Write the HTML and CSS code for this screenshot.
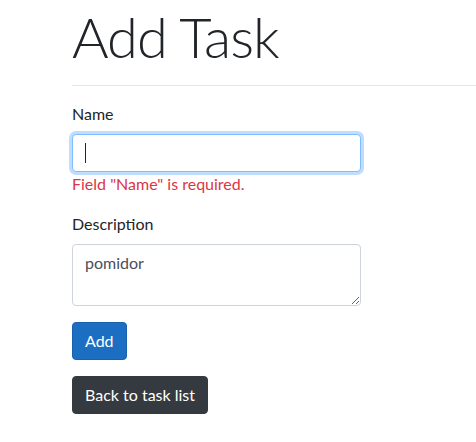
FILE: index.html
```html
<!DOCTYPE html>
<html lang="en">
<head>
<meta charset="utf-8">
<title>Add Task</title>
<link rel="stylesheet" href="styles.css">
</head>
<body>
<div class="page">
  <h1 class="title">Add Task</h1>
  <hr class="rule">
  <form class="task-form">
    <div class="group">
      <label class="label" for="name">Name</label>
      <div class="field">
        <input id="name" class="control is-focused" type="text" value="">
        <span class="caret"></span>
      </div>
      <div class="error">Field "Name" is required.</div>
    </div>
    <div class="group">
      <label class="label" for="desc">Description</label>
      <textarea id="desc" class="control area" rows="2">pomidor</textarea>
    </div>
    <button type="button" class="btn btn-primary">Add</button>
  </form>
  <div class="back">
    <button type="button" class="btn btn-dark">Back to task list</button>
  </div>
</div>
</body>
</html>
```
FILE: styles.css
```css
html, body {
  margin: 0;
  padding: 0;
  background: #fff;
}
body {
  font-family: "Lato", "Open Sans", sans-serif;
  font-size: 16px;
  line-height: 24px;
  color: #212529;
}
.page {
  padding: 3px 0 0 72px;
}
.title {
  margin: 0;
  font-size: 56px;
  font-weight: 300;
  line-height: 67px;
  letter-spacing: -1px;
  color: #212529;
}
.rule {
  margin: 15px 0 0 0;
  border: 0;
  border-top: 1px solid rgba(0, 0, 0, 0.1);
  height: 0;
}
.task-form {
  margin-top: 16px;
  width: 289px;
}
.group {
  margin-bottom: 16px;
}
.label {
  display: block;
  margin-bottom: 8px;
}
.field {
  position: relative;
}
.control {
  display: block;
  box-sizing: border-box;
  width: 289px;
  height: 38px;
  margin: 0;
  padding: 6px 12px;
  font-family: inherit;
  font-size: 16px;
  line-height: 24px;
  color: #495057;
  background: #fff;
  border: 1px solid #ced4da;
  border-radius: 4px;
  outline: none;
}
.control.is-focused {
  border-color: #80bdff;
  box-shadow: 0 0 0 3px rgba(0, 123, 255, 0.25);
}
.caret {
  position: absolute;
  left: 13px;
  top: 9px;
  width: 1px;
  height: 20px;
  background: #212529;
}
.area {
  height: 62px;
  resize: vertical;
}
.error {
  color: #dc3545;
}
.btn {
  display: inline-block;
  box-sizing: border-box;
  height: 38px;
  margin: 0;
  padding: 6px 12px;
  font-family: inherit;
  font-size: 16px;
  line-height: 24px;
  color: #fff;
  border: 1px solid transparent;
  border-radius: 4px;
  cursor: pointer;
}
.btn-primary {
  background: #1b6ec2;
  border-color: #1861ac;
}
.btn-dark {
  background: #343a40;
  border-color: #343a40;
}
.back {
  margin-top: 16px;
}
```
